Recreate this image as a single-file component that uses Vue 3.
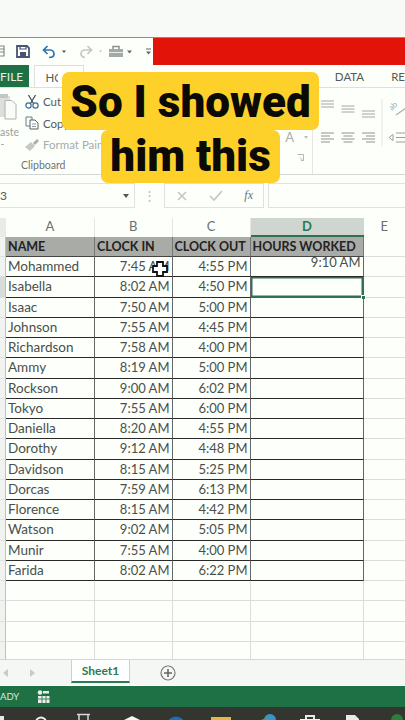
<script setup>
const rows = [
  ['Mohammed', '7:45 AM', '4:55 PM', '9:10 AM'],
  ['Isabella', '8:02 AM', '4:50 PM', ''],
  ['Isaac', '7:50 AM', '5:00 PM', ''],
  ['Johnson', '7:55 AM', '4:45 PM', ''],
  ['Richardson', '7:58 AM', '4:00 PM', ''],
  ['Ammy', '8:19 AM', '5:00 PM', ''],
  ['Rockson', '9:00 AM', '6:02 PM', ''],
  ['Tokyo', '7:55 AM', '6:00 PM', ''],
  ['Daniella', '8:20 AM', '4:55 PM', ''],
  ['Dorothy', '9:12 AM', '4:48 PM', ''],
  ['Davidson', '8:15 AM', '5:25 PM', ''],
  ['Dorcas', '7:59 AM', '6:13 PM', ''],
  ['Florence', '8:15 AM', '4:42 PM', ''],
  ['Watson', '9:02 AM', '5:05 PM', ''],
  ['Munir', '7:55 AM', '4:00 PM', ''],
  ['Farida', '8:02 AM', '6:22 PM', '']
]
const emptyRows = 4
</script>

<template>
  <div class="screen">
    <div class="top-gap"></div>

    <div class="qat">
      <div class="qat-icons">
        <svg width="153" height="26" viewBox="0 0 153 26">
          <path d="M-3 8h7v10h-7zM0 11h4M0 14h4" fill="none" stroke="#7d8c84" stroke-width="1.200" />
          <path d="M17 8h10l2 2v9H17z" fill="none" stroke="#4a5276" stroke-width="1.800" />
          <path d="M20 8h6v3h-6z" fill="none" stroke="#4a5276" stroke-width="1.200" />
          <path d="M20 14h6v5h-6z" fill="#4a5276" />
          <path d="M47.500 8L43.500 12l4 4M44 12h6a4 4 0 0 1 4 4c0 2-2 3.500-5 3.500" fill="none" stroke="#2f74ad" stroke-width="1.700" />
          <path d="M62 12.500h4l-2 2.500z" fill="#555" />
          <path d="M87.500 8l4 4-4 4M91 12h-6a4 4 0 0 0-4 4c0 2 1.500 3 4 3.500" fill="none" stroke="#c3c8c6" stroke-width="1.700" />
          <path d="M99 12.500h3l-1.500 2z" fill="#c3c6c4" />
          <path d="M109 11h14v8h-14z" fill="#a3a9a6" />
          <path d="M109 14.500h14" stroke="#e8ebe8" />
          <path d="M113 11V8.500h6V11" fill="none" stroke="#8d9390" stroke-width="1.500" />
          <path d="M127 12.500h5l-2.500 3z" fill="#666" />
          <path d="M146 10.500h5v1h-5z M146 13.500h5l-2.500 3z" fill="#666" />
        </svg>
      </div>
      <div class="red-band"></div>
    </div>

    <div class="tabs">
      <div class="tab-file">FILE</div>
      <div class="tab-home"><span class="home-text">HOME</span></div>
      <div class="tab-data">DATA</div>
      <div class="tab-re">RE</div>
    </div>

    <div class="ribbon">
      <div class="paste">
        <svg width="18" height="32" viewBox="0 0 18 32">
          <path d="M-6 5H10V26H-6z" fill="#dcdfdb" />
          <path d="M0 3h8v4H0z" fill="#c3c7c4" />
          <path d="M5 9.500h7l4 4V28H5z" fill="#fbfcfa" stroke="#aeb3b0" />
        </svg>
        <span class="paste-label">aste</span>
        <i class="paste-caret"></i>
      </div>
      <div class="clipboard">
        <div class="clip-row">
          <svg width="14" height="15" viewBox="0 0 14 15"><path d="M3.500 1l5 8.500M10.500 1l-5 8.500" stroke="#46525c" stroke-width="1.300" fill="none" /><circle cx="3.500" cy="11.500" r="2.600" fill="none" stroke="#3c6d9c" stroke-width="1.200" /><circle cx="10.500" cy="11.500" r="2.600" fill="none" stroke="#3c6d9c" stroke-width="1.200" /></svg>
          <span>Cut</span>
        </div>
        <div class="clip-row">
          <svg width="14" height="14" viewBox="0 0 14 14"><path d="M1 1h6v9H1z" fill="none" stroke="#6a7a88" /><path d="M5 4h5l3 3v6H5z" fill="#fdfffb" stroke="#53636f" /><path d="M7 8h4M7 10.500h4" stroke="#8a98a0" /></svg>
          <span>Copy</span>
        </div>
        <div class="clip-row painter">
          <svg width="14" height="14" viewBox="0 0 14 14"><path d="M0 9l6-5 4 4-5 5z" fill="#c4c8c6" /><path d="M8 5l4-4 2 2-4 4z" fill="#a8aeab" /></svg>
          <span class="painter-text">Format Painter</span>
        </div>
        <div class="group-name">Clipboard</div>
      </div>
      <div class="font-end">
        <div class="font-row">
          <span class="font-a">A</span>
          <i class="font-caret"></i>
        </div>
        <svg class="launcher" width="8" height="8" viewBox="0 0 8 8"><path d="M0.500 0.500h6v6M3 3.500l3 3M4 6.500h2.500V4" fill="none" stroke="#b5bab7" /></svg>
      </div>
      <div class="align">
        <svg width="92" height="50" viewBox="0 0 92 50">
          <path d="M1 3h13M1 6h13M1 9h13" stroke="#a2a7a5" />
          <path d="M21.500 8h13M21.500 11h13M21.500 14h13" stroke="#a2a7a5" />
          <path d="M42 13h13M42 16h13M42 19h13" stroke="#a2a7a5" />
          <path d="M1 35h13M1 38h9M1 41h13M1 44h9" stroke="#8e9491" />
          <path d="M21.500 35h13M23.500 38h9M21.500 41h13M23.500 44h9" stroke="#8e9491" />
          <path d="M42 35h13M46 38h9M42 41h13M46 44h9" stroke="#8e9491" />
          <path d="M62 1v47" stroke="#e4e7e4" />
          <text x="72" y="13" font-size="8" fill="#a2a7a5" transform="rotate(-45 72 13)">ab</text>
          <path d="M76 17l10-7" fill="none" stroke="#a9aeac" stroke-width="1.300" />
          <path d="M69 39.500l4-3v6zM76 35h10M76 39.500h10M76 44h10" fill="none" stroke="#9a9f9d" />
        </svg>
      </div>
    </div>

    <div class="formula">
      <div class="name-box"><span>3</span><i class="caret"></i></div>
      <div class="dots">⋮</div>
      <div class="fx-box">
        <svg width="12" height="12" viewBox="0 0 12 12"><path d="M2 2l8 8M10 2l-8 8" stroke="#c3c6c4" stroke-width="1.600" /></svg>
        <svg width="14" height="12" viewBox="0 0 14 12"><path d="M1 6l4 4 8-9" stroke="#c3c6c4" stroke-width="1.600" fill="none" /></svg>
        <span class="fx">fx</span>
      </div>
      <div class="formula-input"></div>
    </div>

    <div class="sheet">
      <div class="grid-row heads">
        <div class="h-corner"></div>
        <div class="h-cell">A</div>
        <div class="h-cell">B</div>
        <div class="h-cell">C</div>
        <div class="h-cell active">D</div>
        <div class="h-cell no-line">E</div>
      </div>

      <div class="grid-row title">
        <div class="num"></div>
        <div class="cell">NAME</div>
        <div class="cell">CLOCK IN</div>
        <div class="cell">CLOCK OUT</div>
        <div class="cell">HOURS WORKED</div>
        <div class="rest"></div>
      </div>

      <div class="grid-row data" v-for="(row, i) in rows" :key="row[0]">
        <div class="num" :class="{ picked: i === 1 }"></div>
        <div class="cell">{{ row[0] }}</div>
        <div class="cell right">{{ row[1] }}</div>
        <div class="cell right">{{ row[2] }}</div>
        <div class="cell right up" :class="{ selected: i === 1 }">{{ row[3] }}<b v-if="i === 1" class="handle"></b></div>
        <div class="rest"></div>
      </div>

      <div class="grid-row blank" v-for="n in emptyRows" :key="n">
        <div class="num"></div>
        <div class="cell"></div>
        <div class="cell"></div>
        <div class="cell"></div>
        <div class="cell"></div>
        <div class="rest"></div>
      </div>

      <svg class="cursor" width="16" height="16" viewBox="0 0 16 16">
        <path d="M5 1h6v4h4v6h-4v4H5v-4H1V5h4z" fill="#fff" stroke="#111" stroke-width="1.800" />
      </svg>
    </div>

    <div class="sheet-tabs">
      <svg class="arrows" width="36" height="10" viewBox="0 0 36 10"><path d="M8 1v8L3 5zM30 1v8l5-4z" fill="#c6cac8" /></svg>
      <div class="sheet-tab">Sheet1</div>
      <svg class="plus" width="16" height="16" viewBox="0 0 16 16"><circle cx="8" cy="8" r="7" fill="none" stroke="#777" stroke-width="1.200" /><path d="M8 4v8M4 8h8" stroke="#666" stroke-width="1.600" /></svg>
    </div>

    <div class="status">
      <span>ADY</span>
      <svg width="13" height="13" viewBox="0 0 13 13"><circle cx="3" cy="2.500" r="2.300" fill="#e8efe9" /><path d="M6 1h6v2.500H6zM1 6h11.500v7H1z" fill="#e8efe9" /><path d="M1 9h12M5 6v7M9 6v7" stroke="#1e7145" stroke-width="0.800" /></svg>
    </div>

    <div class="taskbar">
      <svg width="405" height="15" viewBox="0 0 405 15">
        <path d="M-2 9h6v6h-6z" fill="#e8e8e8" />
        <circle cx="41" cy="15.500" r="5" fill="none" stroke="#eee" stroke-width="2" />
        <path d="M77 7.500h13M79 7.500v8M88 7.500v8" fill="none" stroke="#d8d8d8" stroke-width="1.500" />
        <path d="M120 15l12-6 12 6z" fill="#f4f4f4" />
        <circle cx="176" cy="19" r="9.500" fill="#1c6fc0" />
        <path d="M211 10h20v5h-20z" fill="#e6b93e" />
        <circle cx="270" cy="13" r="6" fill="#3a93c4" />
        <path d="M256 15l10-4 12 4z" fill="#4fa05c" />
        <path d="M300 12h20v3h-20z" fill="#f2f2f2" />
        <path d="M306 12V9h8v3" fill="none" stroke="#e8e8e8" stroke-width="2" />
        <path d="M346 8h9l4 4v3h-13z" fill="#e9e9e9" />
        <circle cx="397" cy="13" r="6" fill="#2f7d3b" />
      </svg>
    </div>

    <div class="caption">
      <span class="caption-line first">So I showed</span>
      <span class="caption-line second">him this</span>
    </div>
  </div>
</template>

<style>
html, body { margin: 0; background: #fdfefc; }
</style>

<style scoped>
.screen {
  position: relative;
  width: 405px;
  height: 720px;
  overflow: hidden;
  background: #fdfffb;
  font-family: Lato, "Liberation Sans", sans-serif;
  color: #3b3f3d;
}

.top-gap {
  height: 38px;
  border-bottom: 1px solid #7f9488;
  box-sizing: border-box;
  background: #f8faf7;
}

.qat {
  display: flex;
  height: 27px;
}
.qat-icons { width: 153px; }
.qat-icons svg { display: block; }
.red-band {
  flex: 1;
  background: #e2140a;
}

.tabs {
  display: flex;
  align-items: stretch;
  height: 22px;
  font-size: 11.500px;
  color: #555b58;
  border-bottom: 1px solid #dde0dd;
}
.tab-file {
  width: 33px;
  background: #1e7145;
  color: #e6f0ea;
  line-height: 24px;
  font-size: 12px;
}
.tab-home {
  width: 56px;
  margin-left: 5px;
  padding-left: 11px;
  box-sizing: border-box;
  line-height: 24px;
  border: 1px solid #dde0dd;
  border-bottom: 0;
  background: #fff;
}
.home-text {
  display: block;
  width: 12px;
  overflow: hidden;
  white-space: nowrap;
}
.tab-data {
  margin-left: 251px;
  line-height: 24px;
}
.tab-re {
  margin-left: 27px;
  line-height: 24px;
}

.ribbon {
  display: flex;
  height: 87px;
  border-bottom: 1px solid #d4d8d4;
  box-sizing: border-box;
  background: #fdfffb;
}
.paste {
  width: 25px;
  display: flex;
  flex-direction: column;
  padding-top: 3px;
  box-sizing: border-box;
}
.paste svg { display: block; }
.paste-label {
  font-size: 10.500px;
  color: #9a9f9c;
  margin-top: 3px;
  line-height: 13px;
}
.paste-caret {
  width: 3px;
  height: 1px;
  margin: 5px 0 0 1px;
  background: #aeb3b0;
}
.clipboard {
  width: 100px;
  padding-top: 3px;
  font-size: 11.500px;
  color: #555b58;
}
.clip-row {
  display: flex;
  align-items: center;
  gap: 4px;
  height: 21.500px;
}
.clip-row svg { flex: none; }
.painter { color: #a7acaa; white-space: nowrap; }
.painter-text {
  width: 58px;
  overflow: hidden;
}
.group-name {
  margin: 3px 0 0 -4px;
  font-size: 10.500px;
  color: #6e7471;
}
.font-end {
  flex: 1;
  display: flex;
  flex-direction: column;
  align-items: flex-end;
  padding: 41px 4px 0 0;
  margin-right: 7px;
  border-right: 1px solid #e4e7e4;
}
.font-row {
  display: flex;
  align-items: center;
  gap: 10px;
  font-size: 13px;
  line-height: 16px;
  color: #a9aeac;
}
.font-caret {
  width: 0;
  height: 0;
  border: 2.500px solid transparent;
  border-top: 3px solid #bcc0bd;
  border-bottom: 0;
}
.launcher { display: block; margin: 9px 3px 0 0; }
.align {
  width: 85px;
  padding-top: 10px;
  box-sizing: border-box;
}
.align svg { display: block; }

.formula {
  display: flex;
  align-items: stretch;
  height: 25px;
  margin-top: 8px;
}
.name-box {
  width: 135px;
  box-sizing: border-box;
  display: flex;
  align-items: center;
  justify-content: space-between;
  padding-right: 5px;
  border: 1px solid #dfe2df;
  border-left: 0;
  font-size: 12px;
  color: #555;
}
.caret {
  width: 0;
  height: 0;
  border: 3.500px solid transparent;
  border-top: 4px solid #555;
  border-bottom: 0;
}
.dots {
  width: 29px;
  text-align: center;
  line-height: 24px;
  color: #b8bcb9;
  font-size: 13px;
}
.fx-box {
  width: 100px;
  box-sizing: border-box;
  border: 1px solid #dfe2df;
  display: flex;
  align-items: center;
  justify-content: space-between;
  padding: 0 10px 0 11px;
}
.fx {
  font-family: "Liberation Serif", serif;
  font-style: italic;
  font-size: 12px;
  color: #6b716e;
}
.formula-input {
  flex: 1;
  margin-left: 4px;
  border: 1px solid #dfe2df;
  border-right: 0;
}

.sheet {
  position: relative;
  margin-top: 10px;
  height: 441px;
  overflow: hidden;
}
.grid-row {
  display: grid;
  grid-template-columns: 6px 89px 77.500px 78px 113px 1fr;
}
.heads { height: 18.500px; }
.h-corner { background: #e9ebe9; }
.h-cell {
  text-align: center;
  font-size: 13px;
  line-height: 17px;
  color: #6a706d;
  border-right: 1px solid #e3e6e3;
  box-sizing: border-box;
}
.h-cell.active {
  background: #cfd6d1;
  color: #2a7a50;
  font-weight: 700;
  border-bottom: 2px solid #2f7150;
  border-right: 0;
}
.h-cell.no-line { border-right: 0; }

.title { height: 20.500px; }
.title .cell {
  background: #a9aba6;
  color: #222;
  font-size: 12.500px;
  font-weight: 700;
  line-height: 20px;
  padding: 0 0 0 2px;
  border-right: 1px solid #777;
  border-bottom: 1px solid #444;
  white-space: nowrap;
}
.data { height: 20.250px; }
.blank { height: 20.250px; }

.num {
  background: #f1f3f1;
  border-right: 1px solid #bcc0bd;
  border-bottom: 1px solid #dfe2df;
  box-sizing: border-box;
}
.num.picked { background: #d7dcd8; }

.cell {
  box-sizing: border-box;
  min-width: 0;
  font-size: 13.500px;
  line-height: 19px;
  padding: 0 2px;
  white-space: nowrap;
  overflow: hidden;
}
.data .cell {
  border-right: 1px solid #666;
  border-bottom: 1px solid #2a2a2a;
  color: #4a4f4c;
}
.data .right { font-size: 13px; }
.blank .cell, .rest {
  border-right: 1px solid #dadddb;
  border-bottom: 1px solid #dadddb;
  box-sizing: border-box;
}
.rest { border-right: 0; }
.right { text-align: right; }
.data .up { line-height: 11px; overflow: visible; position: relative; }
.data .cell.selected {
  box-shadow: inset 0 0 0 1.500px #2f7150;
  border-color: #2f7150;
}
.handle {
  position: absolute;
  right: -3px;
  bottom: -3px;
  width: 5px;
  height: 5px;
  background: #2f7150;
  border: 1px solid #fff;
  box-sizing: border-box;
}
.cursor {
  position: absolute;
  left: 152px;
  top: 43px;
}

.sheet-tabs {
  display: flex;
  align-items: flex-start;
  height: 26px;
  background: #f5f7f4;
  border-top: 1px solid #d4d8d4;
  box-sizing: border-box;
}
.arrows { margin: 8px 0 0 0; width: 36px; }
.sheet-tab {
  width: 59px;
  margin-left: 35px;
  height: 23px;
  box-sizing: border-box;
  text-align: center;
  line-height: 21px;
  font-size: 12px;
  font-weight: 700;
  color: #2b7a52;
  background: #fff;
  border-left: 1px solid #cdd1cd;
  border-right: 1px solid #cdd1cd;
  border-bottom: 2px solid #2b7a52;
}
.plus { margin: 5px 0 0 30px; }

.status {
  display: flex;
  align-items: center;
  gap: 18px;
  height: 21px;
  margin-top: 1px;
  background: #1e7145;
  color: #dbe8e0;
  font-size: 9.500px;
}

.taskbar {
  height: 15px;
  background: #33352f;
}
.taskbar svg { display: block; }

.caption {
  position: absolute;
  left: 0;
  top: 72px;
  width: 381px;
  display: flex;
  flex-direction: column;
  align-items: center;
  font-family: Roboto, "Liberation Sans", sans-serif;
  font-weight: 900;
  font-size: 44px;
  color: #0b0a06;
}
.caption-line {
  background: #fdd12a;
  border-radius: 7px;
  white-space: nowrap;
  text-align: center;
}
.first { width: 257px; line-height: 60px; height: 58px; }
.second { width: 179px; line-height: 52px; height: 53px; }
</style>
